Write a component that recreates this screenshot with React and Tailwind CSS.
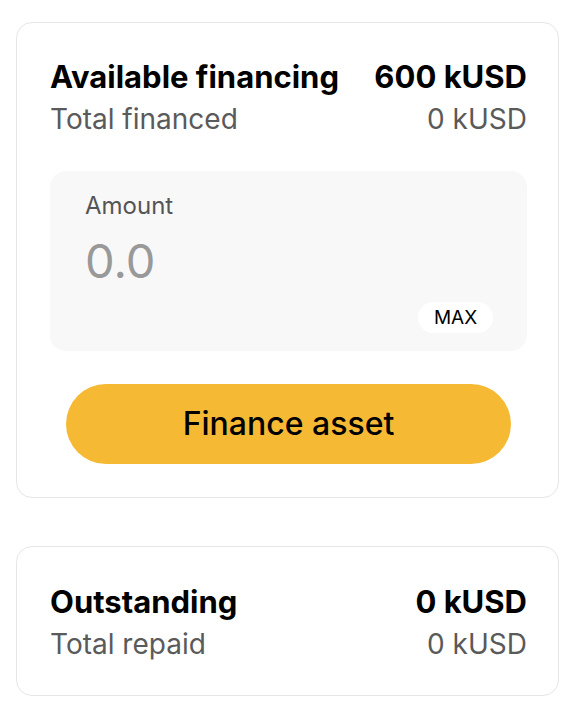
import { useState } from 'react';

function Row({ label, value, strong }) {
  const cls = strong
    ? 'text-[31px] leading-[36px] font-bold text-black'
    : 'text-[28px] leading-[34px] text-[#5a5a5a]';
  return (
    <div className={`flex items-center justify-between ${cls}`}>
      <span>{label}</span>
      <span>{value}</span>
    </div>
  );
}

export default function App() {
  const [amount, setAmount] = useState('');

  return (
    <div className="min-h-screen bg-white pt-[22px] font-['Inter',sans-serif]">
      {/* Financing card */}
      <div className="ml-4 w-[543px] rounded-[16px] border-[1.5px] border-[#e6e6e6] pl-[33px] pr-[31px] pt-[36px] pb-[33px]">
        <div className="space-y-[7px]">
          <Row label="Available financing" value="600 kUSD" strong />
          <Row label="Total financed" value="0 kUSD" />
        </div>

        <div className="mt-[35px] rounded-[16px] bg-[#f8f8f8] pl-[35px] pr-[34px] pt-[20px] pb-[18px]">
          <div className="text-[24px] leading-[29px] text-[#555]">Amount</div>
          <input
            value={amount}
            onChange={e => setAmount(e.target.value)}
            placeholder="0.0"
            className="mt-[12px] block h-[57px] w-full bg-transparent text-[47px] leading-[57px] text-[#333] placeholder-[#999] outline-none"
          />
          <div className="mt-[13px] flex justify-end">
            <button className="h-[31px] w-[75px] rounded-full bg-white text-[19px] leading-[31px] text-black">MAX</button>
          </div>
        </div>

        <div className="mt-[33px] px-4">
          <button className="h-[80px] w-full rounded-full bg-[#f5b934] text-[32px] font-medium text-black">
            Finance asset
          </button>
        </div>
      </div>

      {/* Outstanding card */}
      <div className="ml-4 mt-[48px] w-[543px] rounded-[16px] border-[1.5px] border-[#e6e6e6] pl-[33px] pr-[31px] pt-[37px] pb-[34px]">
        <div className="space-y-[7px]">
          <Row label="Outstanding" value="0 kUSD" strong />
          <Row label="Total repaid" value="0 kUSD" />
        </div>
      </div>
    </div>
  );
}
